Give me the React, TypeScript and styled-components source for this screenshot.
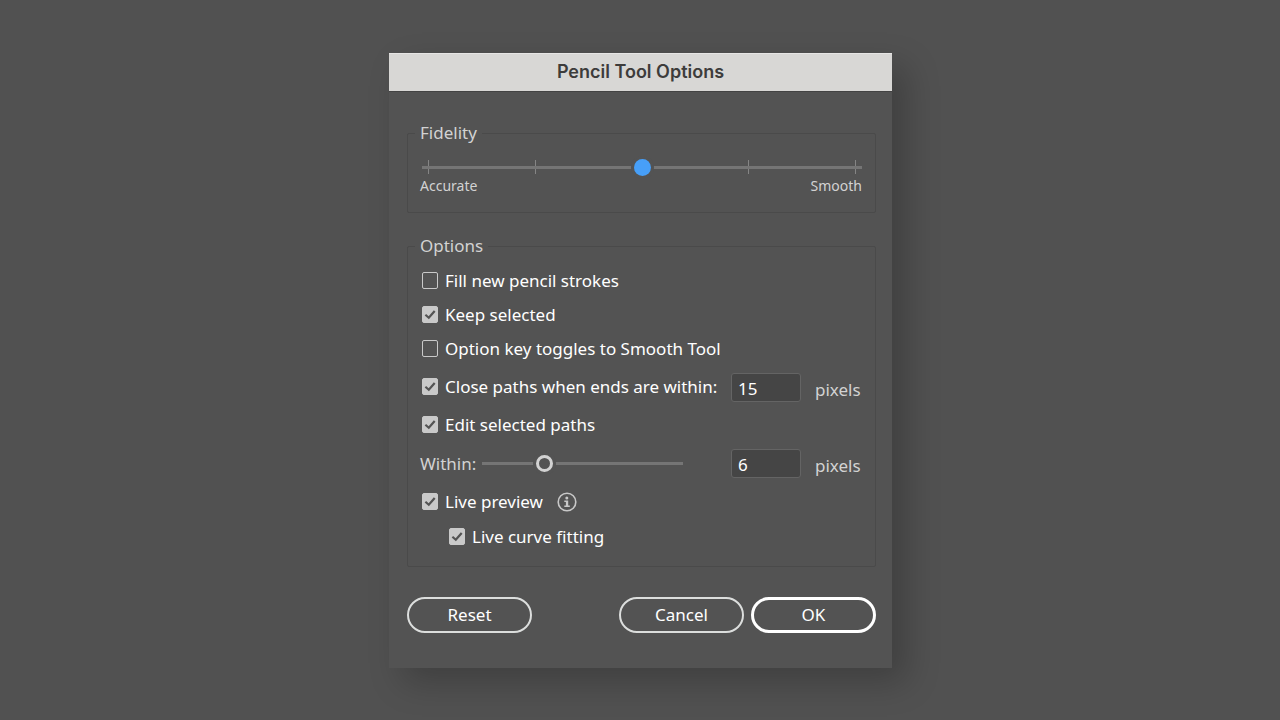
import React, { useState } from "react";
import styled, { createGlobalStyle, css } from "styled-components";

const colors = {
  page: "#515151",
  panel: "#535353",
  line: "#4a4a4a",
  track: "#757575",
  muted: "#d2d2d2",
  box: "#c9c9c9",
  field: "#454545",
  accent: "#479ff8",
};

const GlobalStyle = createGlobalStyle`
  *, *::before, *::after { box-sizing: border-box; }
  body {
    margin: 0;
    background: ${colors.page};
    font-family: "Noto Sans", "Open Sans", sans-serif;
    font-size: 17px;
    font-weight: 450;
    line-height: 24px;
    color: #fff;
  }
  input, button { font: inherit; color: inherit; margin: 0; }
`;

const Page = styled.main`
  display: flex;
  flex-direction: column;
  align-items: center;
  min-height: 100vh;
  padding: 53px 0 52px 1px;
`;

const Dialog = styled.form`
  width: 100%;
  max-width: 503px;
  background: ${colors.panel};
  box-shadow: 14px 14px 32px rgba(0, 0, 0, 0.22);
`;

const TitleBar = styled.header`
  display: flex;
  justify-content: center;
  height: 39px;
  background: #d8d7d5;
  border-top: 1px solid #e6e5e4;
  border-bottom: 1px solid #434343;
`;

const Title = styled.h1`
  margin: 0;
  padding-top: 6px;
  font-family: Inter, "Liberation Sans", sans-serif;
  font-size: 18px;
  font-weight: 600;
  line-height: 24px;
  color: #3d3c3b;
`;

const Body = styled.div`
  display: flex;
  flex-direction: column;
  gap: 21px;
  padding: 29px 16px 35px 18px;
`;

const Group = styled.fieldset`
  min-width: 0;
  margin: 0;
  padding: 0 13px 12px 7px;
  border: 1px solid ${colors.line};
  border-radius: 2px;
`;

const Legend = styled.legend`
  padding: 0 5px;
  color: ${colors.muted};
`;

const OptionRows = styled.div`
  padding-top: 6px;
`;

const thumbBase = css`
  appearance: none;
  border-radius: 50%;
  box-sizing: border-box;
`;

const Range = styled.input<{ $variant: "solid" | "ring" }>`
  appearance: none;
  display: block;
  width: 100%;
  min-width: 0;
  height: 22px;
  background: none;
  cursor: pointer;

  &::-webkit-slider-runnable-track {
    height: 3px;
    background: ${colors.track};
  }
  &::-webkit-slider-thumb {
    ${thumbBase}
    width: 17px;
    height: 17px;
    margin-top: -7px;
    background: ${(p) => (p.$variant === "solid" ? colors.accent : colors.panel)};
    border: ${(p) => (p.$variant === "solid" ? "0" : `3px solid ${colors.muted}`)};
    box-shadow: 0 0 0 3px ${colors.panel};
  }
`;

const FidelityScale = styled.div`
  display: grid;
  padding: 11px 0 0 7px;
`;

const Ticks = styled.div`
  grid-area: 1 / 1;
  display: flex;
  justify-content: space-between;
  align-items: center;
  padding: 0 6px;
`;

const Tick = styled.span`
  width: 1px;
  height: 14px;
  background: #858585;
`;

const ScaleRange = styled(Range)`
  grid-area: 1 / 1;
  position: relative;
`;

const ScaleLabels = styled.div`
  display: flex;
  justify-content: space-between;
  padding: 0 0 6px 5px;
  font-size: 14px;
  line-height: 16px;
  color: ${colors.muted};
`;

const Row = styled.div<{ $height?: number; $indent?: boolean }>`
  display: flex;
  align-items: center;
  min-height: ${(p) => p.$height ?? 34}px;
  padding-left: ${(p) => (p.$indent ? 34 : 7)}px;
`;

const CheckLabel = styled.label`
  display: flex;
  align-items: center;
  gap: 7px;
  flex: none;
`;

const CheckFrame = styled.span`
  display: grid;
  width: 16px;
  height: 18px;
  padding-bottom: 1px;
  flex: none;
`;

const CheckInput = styled.input`
  appearance: none;
  grid-area: 1 / 1;
  width: 16px;
  height: 17px;
  border: 1px solid ${colors.box};
  border-radius: 2px;

  &:checked { background: ${colors.box}; }
  &:checked + svg { visibility: visible; }
`;

const CheckMark = styled.svg`
  grid-area: 1 / 1;
  position: relative;
  width: 16px;
  height: 17px;
  fill: none;
  stroke: ${colors.panel};
  stroke-width: 2.2;
  visibility: hidden;
  pointer-events: none;
`;

const NumberField = styled.input`
  width: 70px;
  height: 29px;
  margin-left: auto;
  padding: 2px 6px 0;
  background: ${colors.field};
  border: 1px solid #646464;
  border-radius: 3px;
`;

const Unit = styled.span`
  width: 47px;
  margin-left: 14px;
  padding-top: 5px;
  color: ${colors.muted};
`;

const WithinLabel = styled.label`
  padding-top: 2px;
  color: ${colors.muted};
`;

const WithinRow = styled(Row)`
  padding-left: 5px;
`;

const WithinSlider = styled.div`
  flex: 0 1 201px;
  margin-left: 6px;
`;

const InfoButton = styled.button`
  display: flex;
  margin-left: 14px;
  padding: 0;
  border: 0;
  background: none;
  color: #c8c8c8;
`;

const Actions = styled.footer`
  display: flex;
  gap: 7px;
  padding-top: 9px;
`;

const PillButton = styled.button<{ $primary?: boolean; $first?: boolean }>`
  flex: 0 1 125px;
  height: 36px;
  margin-right: ${(p) => (p.$first ? "auto" : "0")};
  padding: 0;
  background: none;
  border: ${(p) => (p.$primary ? 3 : 2)}px solid ${(p) => (p.$primary ? "#fff" : "#dcdedd")};
  border-radius: 18px;
  line-height: 24px;
`;

type CheckProps = { label: string; initial?: boolean };

function Check({ label, initial = false }: CheckProps) {
  const [on, setOn] = useState(initial);
  return (
    <CheckLabel>
      <CheckFrame>
        <CheckInput type="checkbox" checked={on} onChange={(e) => setOn(e.target.checked)} />
        <CheckMark viewBox="0 0 16 17" aria-hidden="true">
          <path d="M3.4 8.8 6.8 11.8 12.7 5" />
        </CheckMark>
      </CheckFrame>
      {label}
    </CheckLabel>
  );
}

function InfoIcon() {
  return (
    <svg width="20" height="20" viewBox="0 0 20 20" fill="none" aria-hidden="true">
      <circle cx="10" cy="10" r="8.8" stroke="currentColor" strokeWidth="1.6" />
      <circle cx="9.8" cy="5.9" r="1.5" fill="currentColor" />
      <path d="M7.3 8.4H11.2V13.5H12.8V15.1H7.3V13.5H8.9V9.9H7.3Z" fill="currentColor" />
    </svg>
  );
}

export default function App() {
  return (
    <>
      <GlobalStyle />
      <Page>
        <Dialog onSubmit={(e) => e.preventDefault()}>
          <TitleBar>
            <Title>Pencil Tool Options</Title>
          </TitleBar>
          <Body>
            <Group>
              <Legend>Fidelity</Legend>
              <FidelityScale>
                <Ticks aria-hidden="true">
                  {[0, 1, 2, 3, 4].map((n) => (
                    <Tick key={n} />
                  ))}
                </Ticks>
                <ScaleRange $variant="solid" type="range" min={0} max={4} defaultValue={2} aria-label="Fidelity" />
              </FidelityScale>
              <ScaleLabels>
                <span>Accurate</span>
                <span>Smooth</span>
              </ScaleLabels>
            </Group>

            <Group>
              <Legend>Options</Legend>
              <OptionRows>
                <Row>
                  <Check label="Fill new pencil strokes" />
                </Row>
                <Row>
                  <Check label="Keep selected" initial />
                </Row>
                <Row>
                  <Check label="Option key toggles to Smooth Tool" />
                </Row>
                <Row $height={42}>
                  <Check label="Close paths when ends are within:" initial />
                  <NumberField defaultValue="15" aria-label="Close paths distance in pixels" />
                  <Unit>pixels</Unit>
                </Row>
                <Row>
                  <Check label="Edit selected paths" initial />
                </Row>
                <WithinRow $height={42}>
                  <WithinLabel htmlFor="within">Within:</WithinLabel>
                  <WithinSlider>
                    <Range $variant="ring" id="within" type="range" min={0} max={100} defaultValue={29} />
                  </WithinSlider>
                  <NumberField defaultValue="6" aria-label="Within distance in pixels" />
                  <Unit>pixels</Unit>
                </WithinRow>
                <Row $height={36}>
                  <Check label="Live preview" initial />
                  <InfoButton type="button" aria-label="About live preview">
                    <InfoIcon />
                  </InfoButton>
                </Row>
                <Row $indent>
                  <Check label="Live curve fitting" initial />
                </Row>
              </OptionRows>
            </Group>

            <Actions>
              <PillButton type="reset" $first>
                Reset
              </PillButton>
              <PillButton type="button">Cancel</PillButton>
              <PillButton type="submit" $primary>
                OK
              </PillButton>
            </Actions>
          </Body>
        </Dialog>
      </Page>
    </>
  );
}
